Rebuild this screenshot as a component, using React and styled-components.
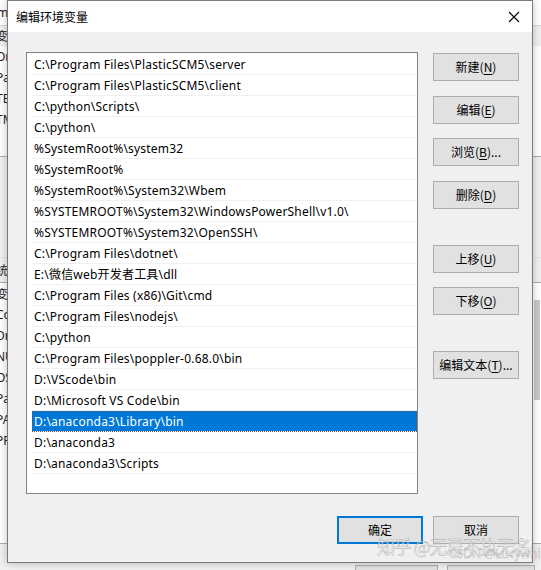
import React from "react";
import styled, { createGlobalStyle } from "styled-components";

const GlobalStyle = createGlobalStyle`
  html, body { margin: 0; padding: 0; }
  body {
    background: #f0f0f0;
    font-family: "Noto Sans", "Noto Sans CJK SC", sans-serif;
  }
`;

const FONT = `"Noto Sans", "Noto Sans CJK SC", sans-serif`;

const Desktop = styled.div`
  position: relative;
  width: 541px;
  height: 570px;
  overflow: hidden;
  background: #f0f0f0;
`;

/* Background window (mostly hidden behind the dialog) */
const BackWindow = styled.div`
  position: absolute;
  inset: 0;
  display: flex;
  flex-direction: column;
  background: #f0f0f0;
`;

const BackTop = styled.div`
  height: 25px;
  background: #fff;
  border-bottom: 1px solid #d9d9d9;
  display: flex;
  align-items: center;
  font: 12px ${FONT};
  color: #222;
  text-indent: -3px;
`;

const BackList = styled.div`
  display: flex;
  flex-direction: column;
  background: #fff;
  border-bottom: 1px solid #adadad;
  height: ${(p) => p.$h}px;
  border-top: ${(p) => (p.$bt ? "1px solid #adadad" : "none")};
`;

const BackRow = styled.div`
  height: ${(p) => p.$h || 21}px;
  display: flex;
  align-items: center;
  font: 12px ${FONT};
  color: #222;
  text-indent: -4px;
  white-space: nowrap;
  overflow: hidden;
  border-bottom: ${(p) => (p.$line ? "1px solid #e5e5e5" : "none")};
`;

const BackScroll = styled.div`
  position: absolute;
  right: 1px;
  top: 300px;
  width: 6px;
  height: 100px;
  background: #c8c8c8;
`;

const BackButton = styled.div`
  position: absolute;
  top: 565px;
  left: ${(p) => p.$x}px;
  width: ${(p) => p.$w}px;
  height: 20px;
  border: 1px solid #adadad;
  background: #e1e1e1;
`;

/* Dialog */
const Dialog = styled.div`
  position: absolute;
  left: 7px;
  top: 0;
  width: 524px;
  height: 561px;
  border: 1px solid #7a7a7a;
  background: #f0f0f0;
  display: flex;
  flex-direction: column;
  box-shadow: 0 0 8px rgba(0, 0, 0, 0.25);
`;

const TitleBar = styled.div`
  height: 31px;
  background: #fff;
  display: flex;
  align-items: center;
  justify-content: space-between;
  padding-left: 8px;
  flex-shrink: 0;
`;

const Title = styled.span`
  font: 12px "Noto Sans CJK SC", sans-serif;
  color: #000;
`;

const CloseBtn = styled.div`
  width: 36px;
  height: 31px;
  display: flex;
  align-items: center;
  justify-content: center;
`;

const Body = styled.div`
  flex: 1;
  display: flex;
  flex-direction: column;
  padding: 20px 0 0 18px;
`;

const Main = styled.div`
  display: flex;
  align-items: flex-start;
`;

const ListBox = styled.div`
  height: 439px;
  width: 385px;
  border: 1px solid #828282;
  background: #fff;
  padding: 1px 0 0 5px;
  display: flex;
  flex-direction: column;
`;

const Row = styled.div`
  height: 20px;
  flex-shrink: 0;
  border-bottom: 1px solid #f0f0f0;
  display: flex;
  align-items: center;
  padding-left: 2px;
  font: 12px ${FONT};
  letter-spacing: 0.2px;
  color: ${(p) => (p.$sel ? "#fff" : "#000")};
  background: ${(p) => (p.$sel ? "#0078d7" : "transparent")};
  outline: ${(p) => (p.$sel ? "1px dotted #5a5a5a" : "none")};
  outline-offset: -1px;
  white-space: nowrap;
`;

const ButtonCol = styled.div`
  display: flex;
  flex-direction: column;
  margin-left: 15px;
  padding-top: 1px;
`;

const Btn = styled.div`
  width: 84px;
  height: 26px;
  flex-shrink: 0;
  margin-top: ${(p) => p.$mt || 0}px;
  border: 1px solid #adadad;
  background: #e1e1e1;
  display: flex;
  align-items: center;
  justify-content: center;
  font: 12px "Noto Sans CJK SC", sans-serif;
  line-height: 1;
  color: #000;
  white-space: nowrap;
  u { text-decoration: underline; text-underline-offset: 2px; }
`;

const PrimaryBtn = styled(Btn)`
  width: 82px;
  height: 24px;
  border: 2px solid #0078d7;
`;

const Footer = styled.div`
  display: flex;
  justify-content: flex-end;
  gap: 10px;
  padding: 22px 13px 0 0;
`;

const Watermark = styled.div`
  position: absolute;
  left: 377px;
  top: 533px;
  font: 18px "Noto Sans CJK SC", sans-serif;
  letter-spacing: -1.2px;
  color: rgba(255, 255, 255, 0.6);
  -webkit-text-stroke: 0.6px rgba(110, 110, 110, 0.45);
  white-space: nowrap;
  pointer-events: none;
`;

const WatermarkSmall = styled.div`
  position: absolute;
  left: 449px;
  top: 545px;
  font: 12px ${FONT};
  color: rgba(255, 255, 255, 0.5);
  -webkit-text-stroke: 0.4px rgba(120, 120, 120, 0.6);
  white-space: nowrap;
  pointer-events: none;
`;

const paths = [
  "C:\\Program Files\\PlasticSCM5\\server",
  "C:\\Program Files\\PlasticSCM5\\client",
  "C:\\python\\Scripts\\",
  "C:\\python\\",
  "%SystemRoot%\\system32",
  "%SystemRoot%",
  "%SystemRoot%\\System32\\Wbem",
  "%SYSTEMROOT%\\System32\\WindowsPowerShell\\v1.0\\",
  "%SYSTEMROOT%\\System32\\OpenSSH\\",
  "C:\\Program Files\\dotnet\\",
  "E:\\微信web开发者工具\\dll",
  "C:\\Program Files (x86)\\Git\\cmd",
  "C:\\Program Files\\nodejs\\",
  "C:\\python",
  "C:\\Program Files\\poppler-0.68.0\\bin",
  "D:\\VScode\\bin",
  "D:\\Microsoft VS Code\\bin",
  "D:\\anaconda3\\Library\\bin",
  "D:\\anaconda3",
  "D:\\anaconda3\\Scripts",
];

const SELECTED = 17;

export default function App() {
  return (
    <>
      <GlobalStyle />
      <Desktop>
        <BackWindow>
          <BackTop>m</BackTop>
          <BackRow $h={20}>变</BackRow>
          <BackList $h={110}>
            <BackRow>OneDrive</BackRow>
            <BackRow>Path</BackRow>
            <BackRow>TEMP</BackRow>
            <BackRow>TMP</BackRow>
          </BackList>
          <BackRow $h={80} />
          <BackRow $h={20} $line />
          <BackRow $h={24}>统</BackRow>
          <BackList $h={260} $bt>
            <BackRow>变</BackRow>
            <BackRow>ComSpec</BackRow>
            <BackRow>DriverData</BackRow>
            <BackRow>NUMBER</BackRow>
            <BackRow>OS</BackRow>
            <BackRow>Path</BackRow>
            <BackRow>PATHEXT</BackRow>
            <BackRow>PROCESSOR</BackRow>
          </BackList>
          <BackScroll />
          <BackButton $x={355} $w={81} />
          <BackButton $x={447} $w={86} />
        </BackWindow>

        <Dialog>
          <TitleBar>
            <Title>编辑环境变量</Title>
            <CloseBtn>
              <svg width="12" height="12" viewBox="0 0 12 12">
                <path d="M1 1 L11 11 M11 1 L1 11" stroke="#000" strokeWidth="1.1" />
              </svg>
            </CloseBtn>
          </TitleBar>
          <Body>
            <Main>
              <ListBox>
                {paths.map((p, i) => (
                  <Row key={i} $sel={i === SELECTED}>
                    {p}
                  </Row>
                ))}
              </ListBox>
              <ButtonCol>
                <Btn>新建(<u>N</u>)</Btn>
                <Btn $mt={15}>编辑(<u>E</u>)</Btn>
                <Btn $mt={14}>浏览(<u>B</u>)...</Btn>
                <Btn $mt={15}>删除(<u>D</u>)</Btn>
                <Btn $mt={36}>上移(<u>U</u>)</Btn>
                <Btn $mt={14}>下移(<u>O</u>)</Btn>
                <Btn $mt={36}>编辑文本(<u>T</u>)...</Btn>
              </ButtonCol>
            </Main>
            <Footer>
              <PrimaryBtn>确定</PrimaryBtn>
              <Btn>取消</Btn>
            </Footer>
          </Body>
        </Dialog>
        <Watermark>知乎 @无忌不执无名</Watermark>
        <WatermarkSmall>CSDN @Lucywhi..</WatermarkSmall>
      </Desktop>
    </>
  );
}
